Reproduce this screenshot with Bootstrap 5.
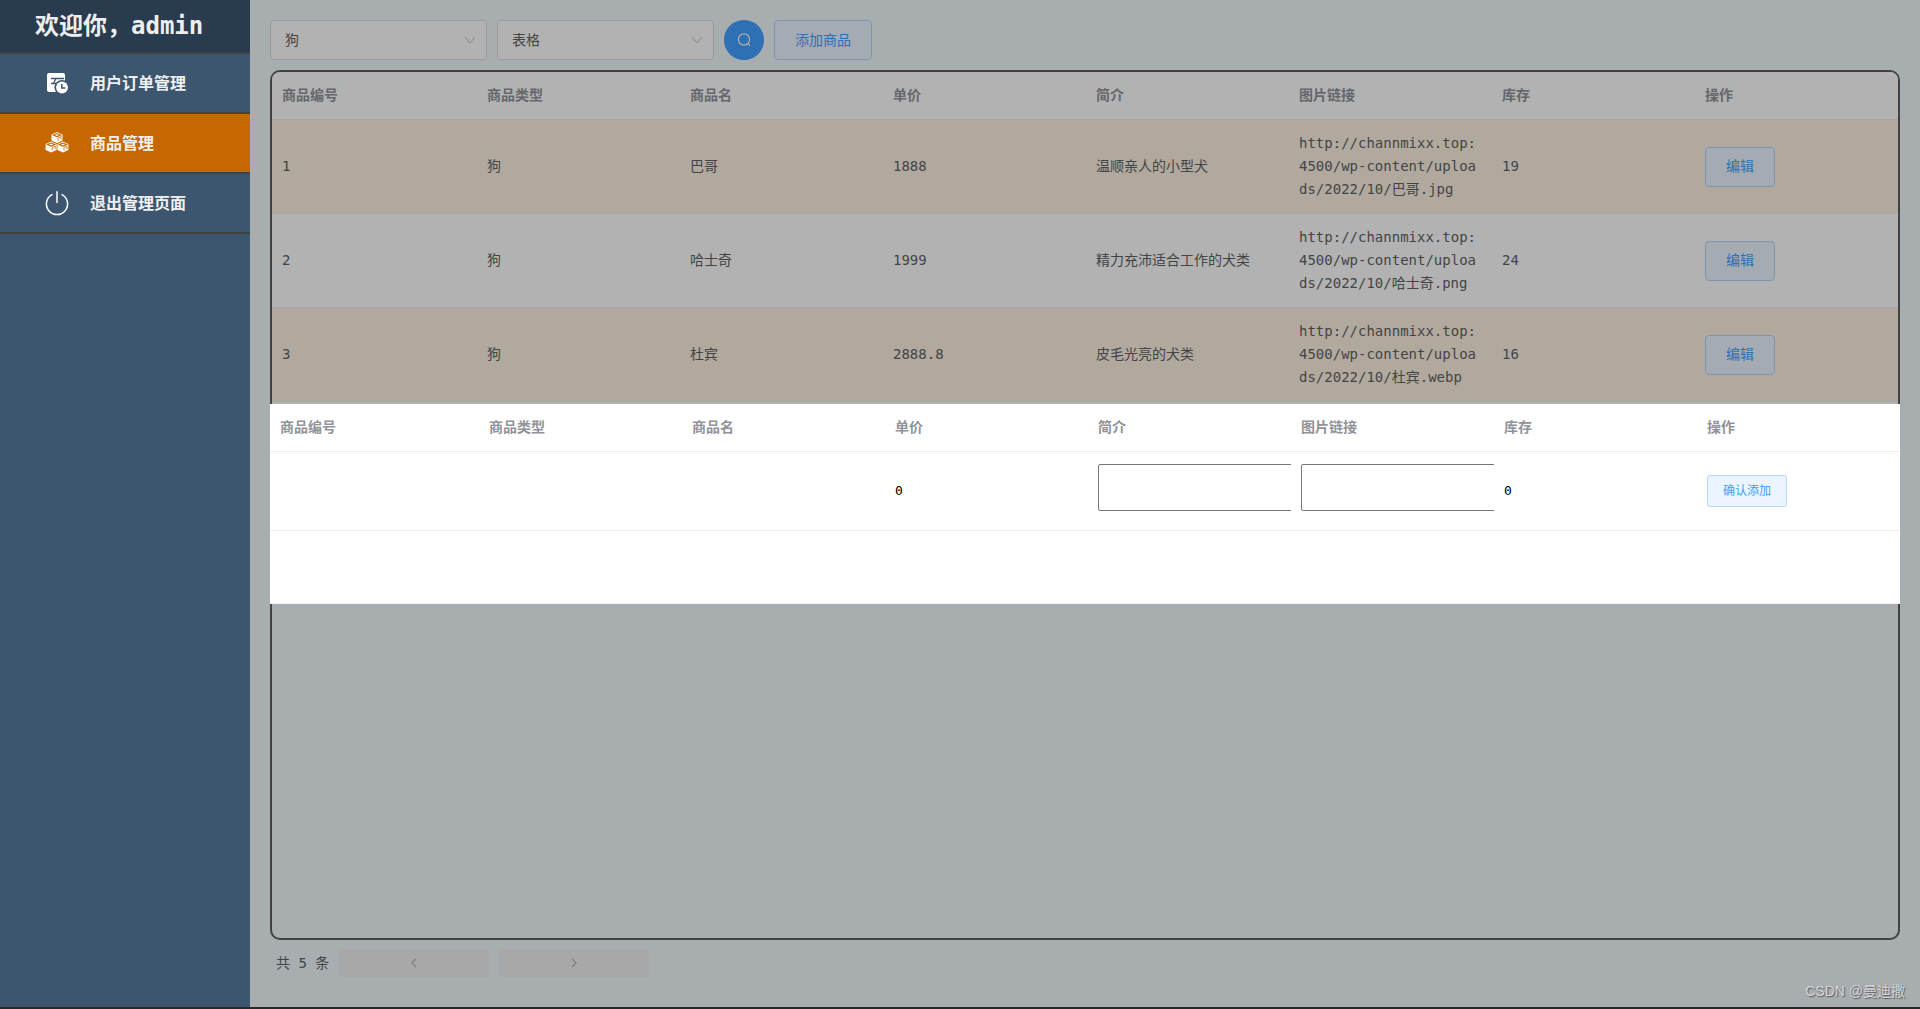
<!DOCTYPE html>
<html lang="zh-CN">
<head>
<meta charset="utf-8">
<meta name="viewport" content="width=device-width, initial-scale=1">
<title>商品管理</title>
<link rel="stylesheet" href="https://cdn.jsdelivr.net/npm/bootstrap@5.3.0/dist/css/bootstrap.min.css">
<style>
  body { font-family: "DejaVu Sans Mono", "Noto Sans CJK SC", monospace; font-size: 14px; line-height: 23px; background: #a8adb0; color: #434446; }
  .app { border-bottom: 2px solid #2a282b; }
  .sidebar { width: 250px; background: #3c566f; }
  .sidebar h1 { background: #293b4e; font-size: 24px; line-height: 52px; font-weight: 700; color: #eee; padding-left: 35px; border-bottom: 2px solid #424242; }
  .side-link { height: 60px; padding: 0 46px; gap: 22px; font-size: 16px; font-weight: 700; color: #f0f0f0; border-bottom: 2px solid #424242; text-decoration: none; }
  .side-link.active { background: #c66700; }
  .side-link svg { width: 22px; height: 24px; color: #fff; overflow: visible; }
  .content-area { padding: 20px 20px 30px; }
  .tools { gap: 10px; margin-bottom: 10px; }
  .picker { width: 217px; }
  .picker select { height: 40px; width: 100%; appearance: none; background: #b2b2b2; color: #434446; border: 1px solid #9a9b9e; border-radius: 4px; padding: 0 14px; }
  .picker svg { right: 10px; top: 13px; width: 14px; height: 14px; color: #84868a; }
  .btn-round { width: 40px; height: 40px; background: #2d70b3; color: #b2b2b2; }
  .btn-plain { height: 40px; padding: 0 20px; font-size: 14px; border-radius: 4px; color: #2d70b3; background: #a5abb3; border: 1px solid #7d95b3; }
  .btn-confirm { height: 32px; padding: 0 15px; font-size: 12px; border-radius: 3px; color: #409eff; background: #ecf5ff; border: 1px solid #b3d8ff; }
  .panel { border: 2px solid #424242; border-radius: 10px; }
  .goods { table-layout: fixed; width: 100%; margin: 0; }
  .goods th, .goods td { width: 203px; padding: 12px 10px; vertical-align: middle; word-break: break-all; border-bottom: 1px solid #a5a6a9; }
  .goods th:first-child, .goods td:first-child { width: auto; }
  .goods th { color: #65676b; font-weight: 700; }
  .goods tr { background: #b2b2b2; }
  .goods tbody tr:nth-child(odd) { background: #b1a99e; }
  .shade-foot { height: 2px; background: #b2b2b2; }
  .dialog-box { left: 20px; right: 20px; top: 404px; height: 200px; background: #fff; color: #000; border-bottom: 1px solid #ebeef5; }
  .dialog-box .goods tr, .dialog-box .goods tbody tr:nth-child(odd) { background: #fff; }
  .dialog-box .goods th, .dialog-box .goods td { border-color: #ebeef5; }
  .dialog-box .goods th { color: #909399; }
  .field-clip { height: 54px; overflow: hidden; }
  .field-clip input { width: 220px; height: 47px; border: 1px solid #767676; border-radius: 2px; padding: 1px 4px; }
  .num { display: block; width: 100%; height: 20px; border: 0; padding: 0; background: transparent; font-size: 13px; line-height: 20px; color: #000; }
  .pager { gap: 10px; padding: 9px 6px 0; }
  .pager button { display: flex; align-items: center; justify-content: center; width: 150px; height: 28px; border: 0; border-radius: 2px; background: #a9a8a8; color: #838589; }
  .stamp { right: 15px; bottom: 4px; font-family: "Liberation Sans", "Noto Sans CJK SC", sans-serif; font-size: 14px; color: #d4d6d8; text-shadow: 1px 1px 1px #55585b; }
</style>
</head>
<body>
<div class="app d-flex min-vh-100">
  <nav class="sidebar flex-shrink-0">
    <h1 class="mb-0">欢迎你，admin</h1>
    <a class="side-link d-flex align-items-center" href="#">
      <svg viewBox="0 0 22 24" fill="none" aria-hidden="true"><rect x="1" y="2" width="18" height="19" rx="2" fill="currentColor"/><path d="M5 7.500h13M5 12.500h5" stroke="#3c566f" stroke-width="1.600" /><path d="M10 7.500L7.500 12.500" stroke="#3c566f" stroke-width="1.200"/><circle cx="16" cy="16.500" r="7.600" fill="#3c566f"/><circle cx="16" cy="16.500" r="5.900" fill="currentColor"/><path d="M15.800 13v4h3.600" stroke="#3c566f" stroke-width="1.500"/></svg>
      用户订单管理</a>
    <a class="side-link active d-flex align-items-center" href="#" aria-current="page">
      <svg viewBox="0 0 22 24" aria-hidden="true"><defs><g id="cube"><path d="M5.500 0L11 2.500V8.500L5.500 11 0 8.500V2.500z" fill="#fff"/><path d="M1.800 3L5.500 4.600 9.200 3 5.500 1.500z" fill="#fff" stroke="#c66700" stroke-width="1.100"/><path d="M6.600 9V6L9.600 4.600V7.600" fill="none" stroke="#c66700" stroke-width=".8"/></g></defs><use href="#cube" x="5.500" y="1"/><use href="#cube" x="-.400" y="10.500"/><use href="#cube" x="11.400" y="10.500"/></svg>
      商品管理</a>
    <a class="side-link d-flex align-items-center" href="#">
      <svg viewBox="0 0 22 24" fill="none" stroke="currentColor" stroke-width="1.500" stroke-linecap="round" aria-hidden="true"><path d="M11 .800V11.500M6 3.600a10.600 10.600 0 1 0 10 0"/></svg>
      退出管理页面</a>
  </nav>
  <main class="content-area flex-grow-1 d-flex flex-column position-relative">
    <div class="tools d-flex align-items-center">
      <div class="picker position-relative"><select aria-label="商品类型"><option>狗</option><option>猫</option></select><svg class="position-absolute pe-none" viewBox="0 0 14 14" fill="none" stroke="currentColor" aria-hidden="true"><path d="M2 4l5 6 5-6"/></svg></div>
      <div class="picker position-relative"><select aria-label="显示方式"><option>表格</option></select><svg class="position-absolute pe-none" viewBox="0 0 14 14" fill="none" stroke="currentColor" aria-hidden="true"><path d="M2 4l5 6 5-6"/></svg></div>
      <button class="btn btn-round rounded-circle p-0 d-flex align-items-center justify-content-center" type="button" aria-label="搜索"><svg width="14" height="14" viewBox="0 0 14 14" fill="none" stroke="currentColor" stroke-width="1.200" aria-hidden="true"><circle cx="7" cy="6.500" r="5.600"/><path d="M10.800 10.600l2 2.200"/></svg></button>
      <button class="btn btn-plain" type="button">添加商品</button>
    </div>
    <section class="panel flex-grow-1 overflow-hidden">
      <table class="goods">
        <thead><tr><th>商品编号</th><th>商品类型</th><th>商品名</th><th>单价</th><th>简介</th><th>图片链接</th><th>库存</th><th>操作</th></tr></thead>
        <tbody>
          <tr><td>1</td><td>狗</td><td>巴哥</td><td>1888</td><td>温顺亲人的小型犬</td><td>http://channmixx.top:4500/wp-content/uploads/2022/10/巴哥.jpg</td><td>19</td><td><button class="btn btn-plain" type="button">编辑</button></td></tr>
          <tr><td>2</td><td>狗</td><td>哈士奇</td><td>1999</td><td>精力充沛适合工作的犬类</td><td>http://channmixx.top:4500/wp-content/uploads/2022/10/哈士奇.png</td><td>24</td><td><button class="btn btn-plain" type="button">编辑</button></td></tr>
          <tr><td>3</td><td>狗</td><td>杜宾</td><td>2888.8</td><td>皮毛光亮的犬类</td><td>http://channmixx.top:4500/wp-content/uploads/2022/10/杜宾.webp</td><td>16</td><td><button class="btn btn-plain" type="button">编辑</button></td></tr>
        </tbody>
      </table>
      <div class="shade-foot"></div>
    </section>
    <div class="pager d-flex align-items-center">
      <span>共 5 条</span>
      <button type="button" disabled aria-label="上一页"><svg width="12" height="12" viewBox="0 0 12 12" fill="none" stroke="currentColor" stroke-width="1.500" aria-hidden="true"><path d="M8 2L4 6l4 4"/></svg></button>
      <button type="button" disabled aria-label="下一页"><svg width="12" height="12" viewBox="0 0 12 12" fill="none" stroke="currentColor" stroke-width="1.500" aria-hidden="true"><path d="M4 2l4 4-4 4"/></svg></button>
    </div>
    <div class="dialog-box position-absolute" role="dialog" aria-label="添加商品">
      <table class="goods">
        <thead><tr><th>商品编号</th><th>商品类型</th><th>商品名</th><th>单价</th><th>简介</th><th>图片链接</th><th>库存</th><th>操作</th></tr></thead>
        <tbody><tr><td></td><td></td><td></td>
          <td><input class="num" type="text" inputmode="decimal" value="0" aria-label="单价"></td>
          <td class="pe-0"><div class="field-clip"><input type="text" aria-label="简介"></div></td>
          <td class="pe-0"><div class="field-clip"><input type="text" aria-label="图片链接"></div></td>
          <td><input class="num" type="text" inputmode="numeric" value="0" aria-label="库存"></td>
          <td><button class="btn btn-confirm" type="button">确认添加</button></td></tr></tbody>
      </table>
    </div>
    <div class="stamp position-absolute">CSDN @曼迪撒</div>
  </main>
</div>
<script src="https://cdn.jsdelivr.net/npm/bootstrap@5.3.0/dist/js/bootstrap.bundle.min.js"></script>
</body>
</html>
